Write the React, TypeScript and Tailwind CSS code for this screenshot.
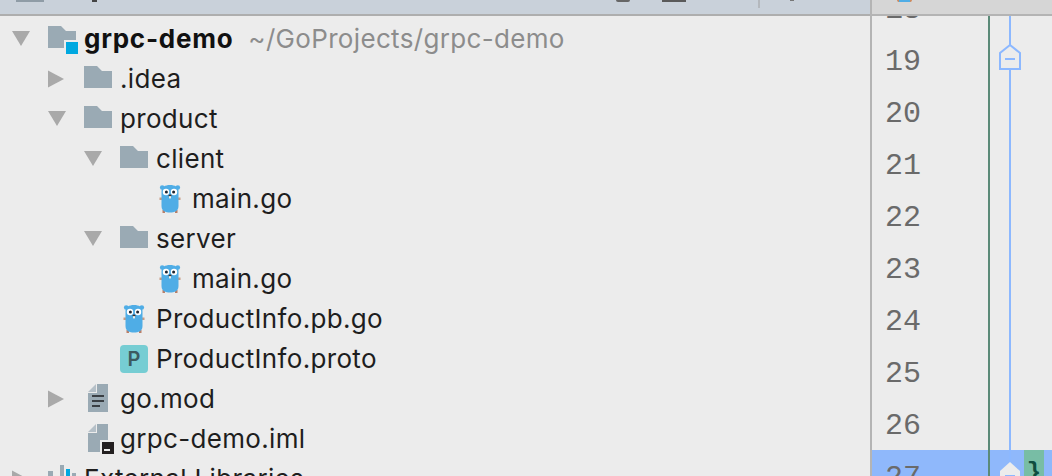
import React from "react";

const Arrow = ({ open }: { open: boolean }) =>
  open ? (
    <svg width="20" height="18" viewBox="0 0 20 18" className="shrink-0">
      <path d="M0 1H18L9 16Z" fill="#a9a9a9" />
    </svg>
  ) : (
    <svg width="20" height="18" viewBox="0 0 20 18" className="shrink-0">
      <path d="M0 0.5L16 9L0 17.5Z" fill="#a9a9a9" />
    </svg>
  );

const Folder = () => (
  <svg width="28" height="28" viewBox="0 0 28 28" className="block">
    <path d="M0 1H13L18 6H28V23H0Z" fill="#9aaab4" />
  </svg>
);

const ProjectFolder = () => (
  <svg width="28" height="28" viewBox="0 0 28 28" className="block overflow-visible">
    <path d="M0 1H13L18 6H28V23H0Z" fill="#9aaab4" />
    <rect x="16" y="15" width="16" height="16" fill="#ececec" />
    <rect x="18" y="17" width="12" height="12" fill="#00a8e0" />
  </svg>
);

const Gopher = () => (
  <svg width="22" height="30" viewBox="0 0 22 30" className="block">
    <rect x="0.5" y="13.5" width="3" height="2.5" fill="#c89a82" />
    <rect x="18.5" y="13.5" width="3" height="2.5" fill="#c89a82" />
    <rect x="3.5" y="26" width="2.5" height="3" fill="#b97f68" />
    <rect x="16" y="26" width="2.5" height="3" fill="#b97f68" />
    <circle cx="3.2" cy="3.5" r="2.3" fill="#4fade6" />
    <circle cx="18.8" cy="3.5" r="2.3" fill="#4fade6" />
    <path d="M2.5 7C2.5 3 6 1 11 1S19.5 3 19.5 7V22C19.5 27 15.5 28.5 11 28.5S2.5 27 2.5 22Z" fill="#4fade6" />
    <circle cx="7" cy="8" r="3.2" fill="#fff" />
    <circle cx="15" cy="8" r="3.2" fill="#fff" />
    <circle cx="7.4" cy="8" r="1.5" fill="#1c2430" />
    <circle cx="14.6" cy="8" r="1.5" fill="#1c2430" />
    <ellipse cx="11" cy="11.4" rx="1.6" ry="1" fill="#3a3030" />
    <rect x="10" y="12.2" width="2" height="2.2" fill="#f2efe8" />
  </svg>
);

const Proto = () => (
  <div className="w-[28px] h-[28px] rounded-[4px] bg-[#76cdd3] flex items-center justify-center text-[#3c5a60] text-[20px] font-semibold leading-none">
    P
  </div>
);

const ModFile = () => (
  <svg width="20" height="28" viewBox="0 0 20 28" className="block -translate-y-px">
    <path d="M9 0H20V28H0V9H9Z" fill="#9aaab4" />
    <path d="M0 8L8 0V8Z" fill="#b5c0c8" />
    <rect x="4" y="11" width="12" height="2" fill="#3a3f44" />
    <rect x="4" y="16" width="12" height="2" fill="#3a3f44" />
    <rect x="4" y="21" width="8" height="2" fill="#3a3f44" />
  </svg>
);

const ImlFile = () => (
  <svg width="20" height="28" viewBox="0 0 20 28" className="block overflow-visible -translate-y-px">
    <path d="M9 0H20V28H0V9H9Z" fill="#9aaab4" />
    <path d="M0 8L8 0V8Z" fill="#b5c0c8" />
    <rect x="12" y="16" width="14" height="14" fill="#ececec" />
    <rect x="14" y="18" width="12" height="12" fill="#231f20" />
    <rect x="16" y="25" width="6" height="2" fill="#ececec" />
  </svg>
);

const LibIcon = () => (
  <svg width="28" height="28" viewBox="0 0 28 28" className="block">
    <rect x="0" y="6" width="5" height="22" fill="#9aaab4" />
    <rect x="6" y="12" width="4" height="16" fill="#4cb848" />
    <rect x="12" y="0" width="4" height="28" fill="#9aaab4" />
    <rect x="18" y="4" width="4" height="24" fill="#00a8e0" />
    <rect x="24" y="8" width="4" height="20" fill="#9aaab4" />
  </svg>
);

type Row = {
  depth: number;
  arrow?: boolean | null;
  icon: React.ReactNode;
  name: string;
  bold?: boolean;
  hint?: string;
};

const rows: Row[] = [
  { depth: 0, arrow: true, icon: <ProjectFolder />, name: "grpc-demo", bold: true, hint: "~/GoProjects/grpc-demo" },
  { depth: 1, arrow: false, icon: <Folder />, name: ".idea" },
  { depth: 1, arrow: true, icon: <Folder />, name: "product" },
  { depth: 2, arrow: true, icon: <Folder />, name: "client" },
  { depth: 3, icon: <Gopher />, name: "main.go" },
  { depth: 2, arrow: true, icon: <Folder />, name: "server" },
  { depth: 3, icon: <Gopher />, name: "main.go" },
  { depth: 2, icon: <Gopher />, name: "ProductInfo.pb.go" },
  { depth: 2, icon: <Proto />, name: "ProductInfo.proto" },
  { depth: 1, arrow: false, icon: <ModFile />, name: "go.mod" },
  { depth: 1, icon: <ImlFile />, name: "grpc-demo.iml" },
  { depth: 0, arrow: false, icon: <LibIcon />, name: "External Libraries" },
];

const indent = ["pl-[12px]", "pl-[48px]", "pl-[84px]", "pl-[120px]"];

const lines = [18, 19, 20, 21, 22, 23, 24, 25, 26, 27];

export default function App() {
  return (
    <div className="w-[1052px] h-[476px] overflow-hidden bg-[#ececec] text-[#1e1e1e] flex flex-col font-['Inter','Liberation_Sans',sans-serif]">
      <div className="h-[16px] shrink-0 flex">
        <div className="relative w-[870px] h-full bg-[#c9d1da] border-b-2 border-[#aeaeae] overflow-hidden">
          <div className="absolute left-[16px] top-0 w-[28px] h-[2px] bg-[#8f9ca6]" />
          <div className="absolute left-[92px] top-0 w-[5px] h-[2px] bg-[#444]" />
          <div className="absolute left-[616px] top-0 w-[14px] h-[2px] rounded-b-full bg-[#666]" />
          <div className="absolute left-[662px] top-0 w-[24px] h-[2px] bg-[#5a5a5a]" />
          <div className="absolute left-[758px] top-0 w-[2px] h-[8px] bg-[#b4b8bd]" />
          <div className="absolute left-[790px] top-0 w-[4px] h-[1px] bg-[#777]" />
        </div>
        <div className="w-[2px] bg-[#b4b4b4]" />
        <div className="relative flex-1 bg-[#d6d6d6] border-b-2 border-[#b4b4b4] overflow-hidden">
          <div className="absolute left-[25px] top-0 w-[15px] h-[2px] rounded-b-[4px] bg-[#4fade6] border-x-2 border-[#d08a5c]" />
        </div>
      </div>

      <div className="flex-1 min-h-0 flex">
        <div className="w-[870px] pt-[3px] shrink-0">
          {rows.map((r, i) => (
            <div key={i} className={`h-[40px] flex items-center text-[26px] leading-none tracking-[0.33px] ${indent[r.depth]}`}>
              <div className="w-[36px] shrink-0 flex items-center">
                {r.arrow === true || r.arrow === false ? <Arrow open={r.arrow} /> : null}
              </div>
              <div className="w-[28px] shrink-0 flex justify-center">{r.icon}</div>
              <span className={`ml-[8px] whitespace-nowrap ${r.bold ? "font-bold text-[#111] tracking-[0.75px]" : ""}`}>{r.name}</span>
              {r.hint ? <span className="ml-[15px] whitespace-nowrap text-[#8c8c8c] tracking-[0.33px]">{r.hint}</span> : null}
            </div>
          ))}
        </div>
        <div className="w-[2px] bg-[#b4b4b4] shrink-0" />
        <div className="relative flex-1 overflow-hidden">
          <div className="-mt-[34px]">
            {lines.map((n) => (
              <div
                key={n}
                className={`h-[52px] flex items-center pl-[13px] pt-[4px] text-[30px] text-[#6a6a6a] font-['Liberation_Mono',monospace] ${n === 27 ? "bg-[#8fb8fb]" : ""}`}
              >
                {n}
              </div>
            ))}
          </div>
          <div className="absolute left-[116px] top-0 bottom-0 w-[2px] bg-[#5b8a78]" />
          <div className="absolute left-[137px] top-0 bottom-0 w-[2px] bg-[#8cb8ff]" />
          <svg width="22" height="28" viewBox="0 0 22 28" className="absolute left-[127px] top-[27px]">
            <path d="M11 2L21 10V26H1V10Z" fill="#ececec" stroke="#8cb8ff" strokeWidth="2" />
            <rect x="6" y="15" width="10" height="2" fill="#8cb8ff" />
          </svg>
          <svg width="22" height="16" viewBox="0 0 22 16" className="absolute left-[127px] top-[445px]">
            <path d="M11 1L21 10V16H1V10Z" fill="#ececec" />
            <rect x="6" y="14" width="10" height="2" fill="#8cb8ff" />
          </svg>
          <div className="absolute left-[152px] top-[434px] w-[20px] h-[30px] bg-[#78bda5] flex justify-center text-[24px] font-bold leading-none pt-[11px] text-[#0f4d40] font-['Liberation_Mono',monospace]">
            {"}"}
          </div>
        </div>
      </div>
    </div>
  );
}
